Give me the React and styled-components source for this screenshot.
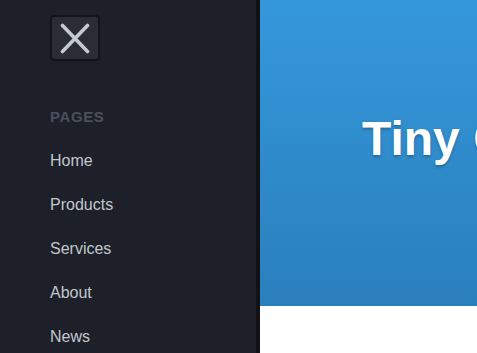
import styled, { createGlobalStyle } from 'styled-components';

const GlobalStyle = createGlobalStyle`
  html, body {
    margin: 0;
    padding: 0;
    height: 100%;
    overflow: hidden;
    background: #fff;
    font-family: "Liberation Sans", Arial, sans-serif;
  }
`;

const Page = styled.div`
  display: flex;
  height: 353px;
  width: 100vw;
  overflow: hidden;
`;

const Sidebar = styled.nav`
  flex: 0 0 260px;
  background: #1d2028;
  border-right: 4px solid #101216;
  padding: 15px 0 0 50px;
  box-sizing: border-box;
`;

const CloseButton = styled.button`
  display: flex;
  align-items: center;
  justify-content: center;
  width: 50px;
  height: 46px;
  padding: 0;
  background: #2a2d35;
  border: 2px solid #121419;
  border-radius: 4px;
  cursor: pointer;
`;

const Label = styled.div`
  margin-top: 48px;
  font-size: 15px;
  line-height: 16px;
  font-weight: bold;
  letter-spacing: 0.6px;
  color: #4a505c;
`;

const Menu = styled.ul`
  list-style: none;
  margin: 14px 0 0;
  padding: 0;
`;

const Item = styled.li`
  font-size: 16px;
  line-height: 44px;
  color: #c3c7ce;
`;

const Main = styled.main`
  flex: 0 0 477px;
  display: flex;
  flex-direction: column;
  overflow: hidden;
`;

const Header = styled.header`
  height: 306px;
  background: linear-gradient(to bottom, #3598dc, #2a7fbc);
  padding: 110px 0 0 102px;
  box-sizing: border-box;
`;

const Title = styled.h1`
  margin: 0;
  font-size: 48px;
  line-height: 1.2;
  font-weight: bold;
  color: #fff;
  white-space: nowrap;
  text-shadow: 0 2px 3px rgba(0, 0, 0, 0.25);
`;

const Content = styled.div`
  flex: 1;
  background: #fff;
`;

const pages = ['Home', 'Products', 'Services', 'About', 'News'];

function App() {
  return (
    <Page>
      <GlobalStyle />
      <Sidebar>
        <CloseButton aria-label="Close menu">
          <svg width="30" height="31" viewBox="0 0 30 31">
            <path d="M2.5 2.5 L27.5 28.5 M27.5 2.5 L2.5 28.5" stroke="#c5c9d1" strokeWidth="3.6" strokeLinecap="round" />
          </svg>
        </CloseButton>
        <Label>PAGES</Label>
        <Menu>
          {pages.map((p) => (
            <Item key={p}>{p}</Item>
          ))}
        </Menu>
      </Sidebar>
      <Main>
        <Header>
          <Title>Tiny CSS Off-Canvas Menu</Title>
        </Header>
        <Content />
      </Main>
    </Page>
  );
}

export default App;
